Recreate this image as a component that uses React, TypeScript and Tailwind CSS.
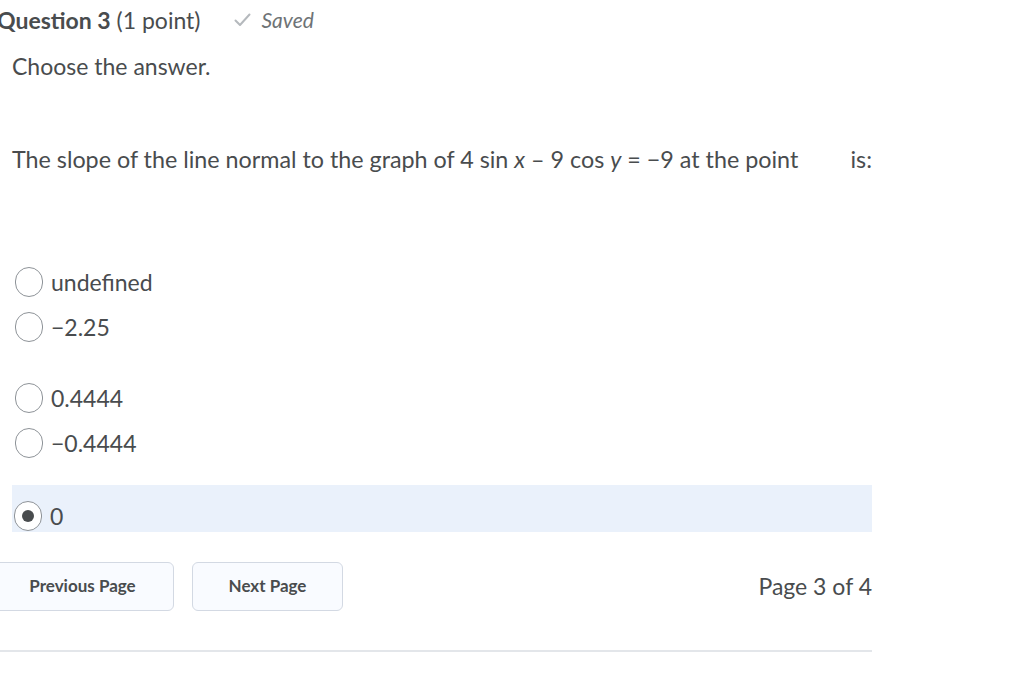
import React from 'react';

const options = [
  { label: 'undefined', gap: 'mt-0' },
  { label: '−2.25', gap: 'mt-[15px]' },
  { label: '0.4444', gap: 'mt-[41px]' },
  { label: '−0.4444', gap: 'mt-[15px]' },
];

function Radio({ checked }: { checked?: boolean }) {
  return (
    <span className="flex h-[30px] w-[28px] shrink-0 items-center justify-center rounded-full border border-[#8e9398] bg-white">
      {checked && <span className="h-[12px] w-[12px] rounded-full bg-[#494c4e]" />}
    </span>
  );
}

export default function App() {
  return (
    <div className="min-h-[673px] bg-white font-['Lato','Noto_Sans',sans-serif] text-[#494c4e]">
      <div className="w-[872px]">
        {/* Header */}
        <div className="flex items-center pt-[4px] -ml-[3px]">
          <h2 className="text-[23px] leading-[28px]">
            <span className="font-bold">Question 3</span> (1 point)
          </h2>
          <span className="ml-[33px] flex items-center gap-[11px] text-[#6e7376] italic text-[21px]">
            <svg width="17" height="14" viewBox="0 0 17 14" fill="none">
              <path d="M1.5 7.5 L6 12 L15.5 1.5" stroke="#b5b9bd" strokeWidth="2" strokeLinecap="round" strokeLinejoin="round" />
            </svg>
            Saved
          </span>
        </div>

        <p className="mt-[15px] px-3 text-[23px] leading-[30px]">Choose the answer.</p>

        <p className="mt-[63px] flex pl-3 text-[23.3px] leading-[30px]">
          <span>
            The slope of the line normal to the graph of 4 sin <i>x</i> – 9 cos <i>y</i> = −9 at the point
          </span>
          <span className="ml-auto">is:</span>
        </p>

        {/* Options */}
        <div className="mt-[93px]">
          {options.map((o) => (
            <label key={o.label} className={`flex items-center gap-[8px] pl-[15px] text-[23px] leading-[28px] ${o.gap}`}>
              <Radio />
              <span>{o.label}</span>
            </label>
          ))}
          <div className="mt-[27px] ml-3 flex h-[47px] items-start bg-[#eaf1fb] pt-[16px]">
            <label className="flex items-center gap-[8px] pl-[2px] text-[23px] leading-[28px]">
              <Radio checked />
              <span>0</span>
            </label>
          </div>
        </div>

        {/* Pager */}
        <div className="mt-[30px] flex items-center">
          <button className="-ml-[9px] h-[49px] w-[183px] rounded-[6px] border border-[#d3d9e3] bg-[#f9fbff] text-[17px] font-bold text-[#494c4e]">
            Previous Page
          </button>
          <button className="ml-[18px] h-[49px] w-[151px] rounded-[6px] border border-[#d3d9e3] bg-[#f9fbff] text-[17px] font-bold text-[#494c4e]">
            Next Page
          </button>
          <span className="ml-auto text-[23px]">Page 3 of 4</span>
        </div>

        <div className="mt-[39px] h-[2px] bg-[#e3e6ea]" />
      </div>
    </div>
  );
}
